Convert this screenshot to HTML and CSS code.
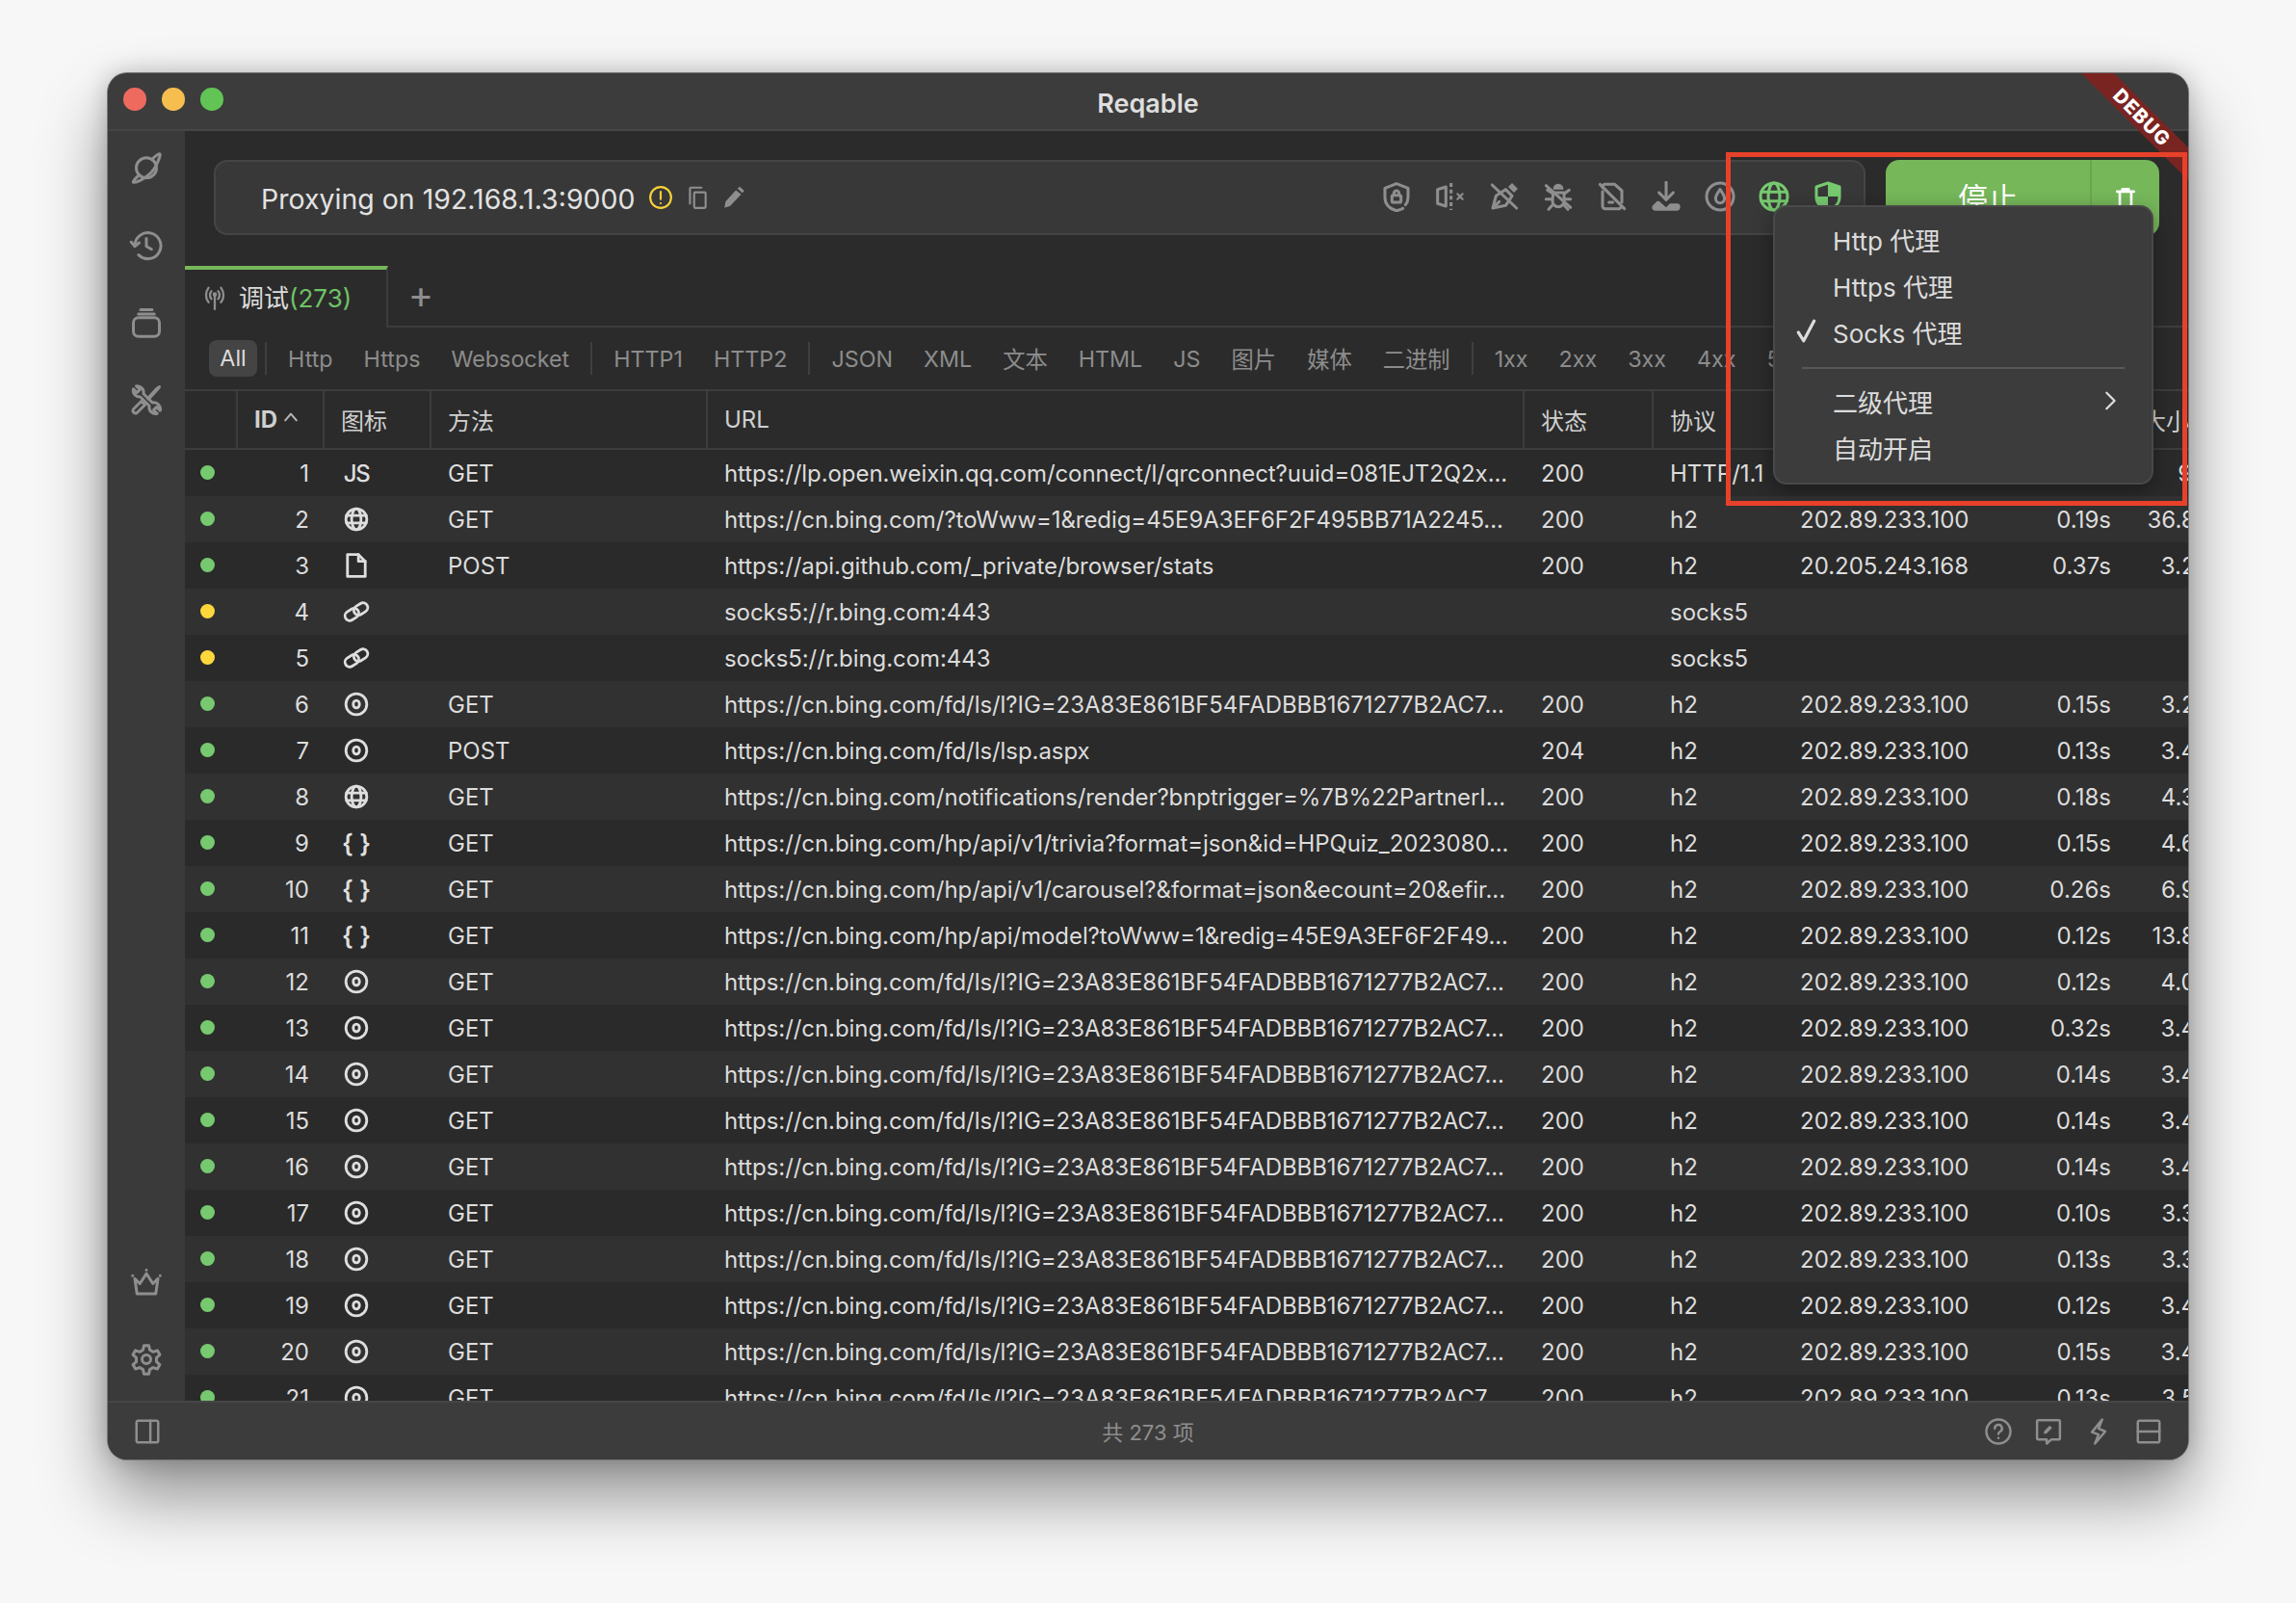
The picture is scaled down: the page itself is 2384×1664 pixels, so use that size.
FILE: index.html
```html
<!DOCTYPE html>
<html lang="en">
<head>
  <meta charset="UTF-8" />
  <meta name="viewport" content="width=device-width, initial-scale=1.0"/>
  <title>Reqable</title>
  <link rel="stylesheet" href="styles.css">
</head>
<body>
  <svg class="sprite" xmlns="http://www.w3.org/2000/svg">
    <symbol id="i-target" viewBox="0 0 24 24"><circle cx="12" cy="12" r="10"/><ellipse cx="12" cy="12" rx="3" ry="3.6"/></symbol>
    <symbol id="i-globe" viewBox="0 0 24 24"><circle cx="12" cy="12" r="10"/><ellipse cx="12" cy="12" rx="4.5" ry="10"/><path d="M2.500 8.500h19M2.500 15.500h19"/></symbol>
    <symbol id="i-doc" viewBox="0 0 24 24"><path d="M3.500 1.500h10.500l6.500 6.500v14.500h-17z"/><path d="M14 1.500V8h6.500"/></symbol>
    <symbol id="i-link" viewBox="-1.800 -1.800 27.600 27.600"><g transform="rotate(-32 12 12)"><rect x="0" y="7.500" width="14" height="9" rx="4.500"/><rect x="10" y="7.500" width="14" height="9" rx="4.500"/></g></symbol>
  </svg>

  <div class="window">
    <header class="titlebar">
      <div class="lights"><i class="light red"></i><i class="light amber"></i><i class="light green"></i></div>
      <div class="app-title">Reqable</div>
    </header>

    <div class="body">
      <nav class="sidebar">
        <div class="side-group">
          <svg class="ic side-ic" viewBox="0 0 24 24"><circle cx="12" cy="11.500" r="7"/><path d="M7 16.500c-3 2.500-4.500 4.500-4 5 2 .5 8-2.500 12-6.500s7-12.500 6.500-13c-.5-.5-2.500.5-5 3"/></svg>
          <svg class="ic side-ic" viewBox="0 0 24 24"><path d="M4 12a9 9 0 1 1 2.600 6.400"/><path d="M1.500 9.500 4 12.500l3-2.500"/><path d="M12 7v5.500l3.500 2"/></svg>
          <svg class="ic side-ic" viewBox="0 0 24 24"><path d="M8 3h8M6.500 6h11"/><rect x="3" y="8.500" width="18" height="13" rx="3.500"/></svg>
          <svg class="ic side-ic" viewBox="0 0 24 24" stroke-width="1.700"><path d="M3 4.500 5.500 7l2-2L5 2.500A4.500 4.500 0 0 1 10 7.800L16.200 14a4.500 4.500 0 0 1 5.300 5.500L19 17l-2 2 2.500 2.500A4.500 4.500 0 0 1 14 16.200L7.800 10A4.500 4.500 0 0 1 3 4.500z"/><path d="M8.500 13l2.500 2.500L5.500 21A1.800 1.800 0 0 1 3 18.500zM13 11l6-6.500L21 3l-1.500 2-6 6.500z"/></svg>
        </div>
        <div class="side-group">
          <svg class="ic side-ic" viewBox="0 0 24 24"><path d="M4 9.500l3.500 3.500L12 6l4.500 7L20 9.500 18.500 20h-13z"/><path d="M2.500 7.500h.01M12 3.500h.01M21.500 7.500h.01"/></svg>
          <svg class="ic side-ic" viewBox="0 0 24 24"><circle cx="12" cy="12" r="3"/><path d="M10.300 2.500h3.400l.6 3 2.400 1.400 2.900-1 1.700 3-2.300 2v2.800l2.300 2-1.700 3-2.900-1-2.400 1.400-.6 3h-3.400l-.6-3-2.400-1.400-2.900 1-1.700-3 2.300-2v-2.800l-2.300-2 1.700-3 2.900 1 2.400-1.400z"/></svg>
        </div>
      </nav>

      <main class="main">
        <div class="proxy-row">
          <div class="proxy-box">
            <span class="proxy-text">Proxying on 192.168.1.3:9000</span>
            <svg class="ic warn-ic" viewBox="0 0 24 24"><circle cx="12" cy="12" r="10"/><path d="M12 6.500v7M12 17.500h.01"/></svg>
            <svg class="ic small-ic" viewBox="0 0 24 24"><rect x="9" y="7" width="11" height="15" rx="1"/><path d="M5 18V3.500a1 1 0 0 1 1-1h10"/></svg>
            <svg class="ic small-ic" viewBox="0 0 24 24"><path class="solid" d="M3 22l1-6L14 5l5 4L8.500 20zM15.500 3.500 17.500 1.500l4.500 4-2 2z"/></svg>
            <div class="tools">
              <svg class="ic tool-ic" viewBox="0 0 24 24"><path d="M17 21.300c-1.500.8-3.200 1.200-5 1.700-5-1.500-9-5-9-10.500V5.500L12 2l9 3.500v7c0 2.500-.8 4.500-2 6"/><rect x="8.500" y="11" width="7" height="5.500" rx="1"/><path d="M10 11V9.500a2 2 0 0 1 4 0V11"/></svg>
              <svg class="ic tool-ic" viewBox="0 0 24 24"><path d="M2 6.500 8.500 4.500v15L2 17.500z"/><path d="M12.500 1.500v21" stroke-dasharray="3 2" stroke-linecap="butt"/><path d="M17.500 10l4 4M21.500 10l-4 4" stroke-width="1.600"/></svg>
              <svg class="ic tool-ic" viewBox="0 0 24 24"><path d="M3 21l2.500-9.500L13 6.500l5 5-5 7.500zM3 21l5-5"/><path class="solid" d="M15 4.500 18 1.500l4.500 4.500-3 3z"/><path d="M2.500 3 21.500 21"/></svg>
              <svg class="ic tool-ic" viewBox="0 0 24 24"><path class="solid" d="M12 2a4 4 0 0 1 4 4.500H8A4 4 0 0 1 12 2z"/><path d="M8 9h8.500v6.500a4.500 4.500 0 0 1-9 0zM8 10 3.500 7M16.500 10 20.500 7M7.500 14H2.500M16.500 14h5M8 18l-3.500 4M16 18l3.500 4"/><path d="M2.500 3.500 21.500 20.500"/></svg>
              <svg class="ic tool-ic" viewBox="0 0 24 24"><path d="M4.500 5V4.500a2 2 0 0 1 2-2H14l5.500 5v9M19 20a2 2 0 0 1-1.500 1.500h-11a2 2 0 0 1-2-2V8"/><path d="M9.500 16.500h3"/><path d="M2.500 2.500 21.500 21.500"/></svg>
              <svg class="ic tool-ic" viewBox="0 0 24 24"><path d="M12 1v13M6.500 9l5.500 5.500L17.500 9"/><path class="solid" d="M3.500 23A2.500 2.500 0 0 1 1 20.500c0-.8.3-1.300.8-1.800L5 15.500h1.500l5.500 5 3-3h6A2.800 2.800 0 0 1 23 20.300 2.700 2.700 0 0 1 20.500 23z"/></svg>
              <svg class="ic tool-ic" viewBox="0 0 24 24"><circle cx="12" cy="12" r="10.500"/><path d="M12 6.500c2 3 3.500 4.800 3.500 7a3.500 3.500 0 0 1-7 0c0-2.200 1.500-4 3.500-7z"/></svg>
              <svg class="ic tool-ic on" viewBox="0 0 24 24"><circle cx="12" cy="12" r="10.500"/><ellipse cx="12" cy="12" rx="4.500" ry="10.500"/><path d="M2 8.500h20M2 15.500h20"/></svg>
              <svg class="ic tool-ic on" viewBox="0 0 24 24"><path d="M12 1.500 21 4.500v8c0 5-4 8.500-9 10-5-1.500-9-5-9-10v-8z"/><path class="solid" d="M12 1.500 21 4.500V12h-9zM3 12h9v10.500c-5-1.500-9-5-9-10.500z"/></svg>
            </div>
          </div>
          <div class="stop-btn">
            <span class="stop-label">停止</span>
            <span class="stop-clear"><svg class="ic trash-ic" viewBox="0 0 24 24"><path d="M4 5.500h16M9 5.500V3h6v2.500M6.500 5.500v16h11v-16"/></svg></span>
          </div>
        </div>

        <div class="tab-row">
          <div class="tab">
            <svg class="ic tab-ic" viewBox="0 0 24 24" stroke-width="1.500"><path d="M12 11v12M6.500 17c-3-3.500-3-9 0-13M17.500 17c3-3.500 3-9 0-13M9 14c-1.500-2-1.500-5 0-7M15 14c1.500-2 1.500-5 0-7"/><circle cx="12" cy="10" r="1"/></svg>
            <span>调试<em>(273)</em></span>
          </div>
          <div class="tab-add">+</div>
        </div>

        <div class="filters">
          <span class="chip active">All</span>
          <i class="sep"></i>
          <span>Http</span><span>Https</span><span>Websocket</span>
          <i class="sep"></i>
          <span>HTTP1</span><span>HTTP2</span>
          <i class="sep"></i>
          <span>JSON</span><span>XML</span><span>文本</span><span>HTML</span><span>JS</span><span>图片</span><span>媒体</span><span>二进制</span>
          <i class="sep"></i>
          <span>1xx</span><span>2xx</span><span>3xx</span><span>4xx</span><span>5xx</span>
        </div>

        <div class="table-head">
          <div></div>
          <div class="id-head">ID<svg class="ic sort-ic" viewBox="0 0 24 24"><path d="M5 16l7-8 7 8"/></svg></div>
          <div>图标</div>
          <div>方法</div>
          <div>URL</div>
          <div>状态</div>
          <div>协议</div>
          <div></div>
          <div></div>
          <div>大小</div>
        </div>

        <div class="rows">
          <div class="row"><i class="dot"></i><span class="num">1</span><span class="kind"><b class="js">JS</b></span><span>GET</span><span class="url">https://lp.open.weixin.qq.com/connect/l/qrconnect?uuid=081EJT2Q2x...</span><span>200</span><span>HTTP/1.1</span><span></span><span></span><span class="num">982 B</span></div>
          <div class="row"><i class="dot"></i><span class="num">2</span><span class="kind"><svg class="ic row-ic"><use href="#i-globe"/></svg></span><span>GET</span><span class="url">https://cn.bing.com/?toWww=1&amp;redig=45E9A3EF6F2F495BB71A2245...</span><span>200</span><span>h2</span><span>202.89.233.100</span><span class="num">0.19s</span><span class="num">36.81 KB</span></div>
          <div class="row"><i class="dot"></i><span class="num">3</span><span class="kind"><svg class="ic row-ic"><use href="#i-doc"/></svg></span><span>POST</span><span class="url">https://api.github.com/_private/browser/stats</span><span>200</span><span>h2</span><span>20.205.243.168</span><span class="num">0.37s</span><span class="num">3.21 KB</span></div>
          <div class="row"><i class="dot wait"></i><span class="num">4</span><span class="kind"><svg class="ic link-ic"><use href="#i-link"/></svg></span><span></span><span class="url">socks5://r.bing.com:443</span><span></span><span>socks5</span><span></span><span></span><span></span></div>
          <div class="row"><i class="dot wait"></i><span class="num">5</span><span class="kind"><svg class="ic link-ic"><use href="#i-link"/></svg></span><span></span><span class="url">socks5://r.bing.com:443</span><span></span><span>socks5</span><span></span><span></span><span></span></div>
          <div class="row"><i class="dot"></i><span class="num">6</span><span class="kind"><svg class="ic row-ic"><use href="#i-target"/></svg></span><span>GET</span><span class="url">https://cn.bing.com/fd/ls/l?IG=23A83E861BF54FADBBB1671277B2AC7...</span><span>200</span><span>h2</span><span>202.89.233.100</span><span class="num">0.15s</span><span class="num">3.21 KB</span></div>
          <div class="row"><i class="dot"></i><span class="num">7</span><span class="kind"><svg class="ic row-ic"><use href="#i-target"/></svg></span><span>POST</span><span class="url">https://cn.bing.com/fd/ls/lsp.aspx</span><span>204</span><span>h2</span><span>202.89.233.100</span><span class="num">0.13s</span><span class="num">3.41 KB</span></div>
          <div class="row"><i class="dot"></i><span class="num">8</span><span class="kind"><svg class="ic row-ic"><use href="#i-globe"/></svg></span><span>GET</span><span class="url">https://cn.bing.com/notifications/render?bnptrigger=%7B%22PartnerI...</span><span>200</span><span>h2</span><span>202.89.233.100</span><span class="num">0.18s</span><span class="num">4.31 KB</span></div>
          <div class="row"><i class="dot"></i><span class="num">9</span><span class="kind"><b>{ }</b></span><span>GET</span><span class="url">https://cn.bing.com/hp/api/v1/trivia?format=json&amp;id=HPQuiz_2023080...</span><span>200</span><span>h2</span><span>202.89.233.100</span><span class="num">0.15s</span><span class="num">4.61 KB</span></div>
          <div class="row"><i class="dot"></i><span class="num">10</span><span class="kind"><b>{ }</b></span><span>GET</span><span class="url">https://cn.bing.com/hp/api/v1/carousel?&amp;format=json&amp;ecount=20&amp;efir...</span><span>200</span><span>h2</span><span>202.89.233.100</span><span class="num">0.26s</span><span class="num">6.91 KB</span></div>
          <div class="row"><i class="dot"></i><span class="num">11</span><span class="kind"><b>{ }</b></span><span>GET</span><span class="url">https://cn.bing.com/hp/api/model?toWww=1&amp;redig=45E9A3EF6F2F49...</span><span>200</span><span>h2</span><span>202.89.233.100</span><span class="num">0.12s</span><span class="num">13.81 KB</span></div>
          <div class="row"><i class="dot"></i><span class="num">12</span><span class="kind"><svg class="ic row-ic"><use href="#i-target"/></svg></span><span>GET</span><span class="url">https://cn.bing.com/fd/ls/l?IG=23A83E861BF54FADBBB1671277B2AC7...</span><span>200</span><span>h2</span><span>202.89.233.100</span><span class="num">0.12s</span><span class="num">4.01 KB</span></div>
          <div class="row"><i class="dot"></i><span class="num">13</span><span class="kind"><svg class="ic row-ic"><use href="#i-target"/></svg></span><span>GET</span><span class="url">https://cn.bing.com/fd/ls/l?IG=23A83E861BF54FADBBB1671277B2AC7...</span><span>200</span><span>h2</span><span>202.89.233.100</span><span class="num">0.32s</span><span class="num">3.41 KB</span></div>
          <div class="row"><i class="dot"></i><span class="num">14</span><span class="kind"><svg class="ic row-ic"><use href="#i-target"/></svg></span><span>GET</span><span class="url">https://cn.bing.com/fd/ls/l?IG=23A83E861BF54FADBBB1671277B2AC7...</span><span>200</span><span>h2</span><span>202.89.233.100</span><span class="num">0.14s</span><span class="num">3.41 KB</span></div>
          <div class="row"><i class="dot"></i><span class="num">15</span><span class="kind"><svg class="ic row-ic"><use href="#i-target"/></svg></span><span>GET</span><span class="url">https://cn.bing.com/fd/ls/l?IG=23A83E861BF54FADBBB1671277B2AC7...</span><span>200</span><span>h2</span><span>202.89.233.100</span><span class="num">0.14s</span><span class="num">3.41 KB</span></div>
          <div class="row"><i class="dot"></i><span class="num">16</span><span class="kind"><svg class="ic row-ic"><use href="#i-target"/></svg></span><span>GET</span><span class="url">https://cn.bing.com/fd/ls/l?IG=23A83E861BF54FADBBB1671277B2AC7...</span><span>200</span><span>h2</span><span>202.89.233.100</span><span class="num">0.14s</span><span class="num">3.41 KB</span></div>
          <div class="row"><i class="dot"></i><span class="num">17</span><span class="kind"><svg class="ic row-ic"><use href="#i-target"/></svg></span><span>GET</span><span class="url">https://cn.bing.com/fd/ls/l?IG=23A83E861BF54FADBBB1671277B2AC7...</span><span>200</span><span>h2</span><span>202.89.233.100</span><span class="num">0.10s</span><span class="num">3.31 KB</span></div>
          <div class="row"><i class="dot"></i><span class="num">18</span><span class="kind"><svg class="ic row-ic"><use href="#i-target"/></svg></span><span>GET</span><span class="url">https://cn.bing.com/fd/ls/l?IG=23A83E861BF54FADBBB1671277B2AC7...</span><span>200</span><span>h2</span><span>202.89.233.100</span><span class="num">0.13s</span><span class="num">3.31 KB</span></div>
          <div class="row"><i class="dot"></i><span class="num">19</span><span class="kind"><svg class="ic row-ic"><use href="#i-target"/></svg></span><span>GET</span><span class="url">https://cn.bing.com/fd/ls/l?IG=23A83E861BF54FADBBB1671277B2AC7...</span><span>200</span><span>h2</span><span>202.89.233.100</span><span class="num">0.12s</span><span class="num">3.41 KB</span></div>
          <div class="row"><i class="dot"></i><span class="num">20</span><span class="kind"><svg class="ic row-ic"><use href="#i-target"/></svg></span><span>GET</span><span class="url">https://cn.bing.com/fd/ls/l?IG=23A83E861BF54FADBBB1671277B2AC7...</span><span>200</span><span>h2</span><span>202.89.233.100</span><span class="num">0.15s</span><span class="num">3.41 KB</span></div>
          <div class="row"><i class="dot"></i><span class="num">21</span><span class="kind"><svg class="ic row-ic"><use href="#i-target"/></svg></span><span>GET</span><span class="url">https://cn.bing.com/fd/ls/l?IG=23A83E861BF54FADBBB1671277B2AC7...</span><span>200</span><span>h2</span><span>202.89.233.100</span><span class="num">0.13s</span><span class="num">3.51 KB</span></div>
        </div>
      </main>
    </div>

    <footer class="statusbar">
      <svg class="ic status-ic" viewBox="0 0 24 24"><rect x="3" y="3" width="18" height="18" rx="1.500"/><path d="M14.500 3v18"/></svg>
      <div class="count">共 273 项</div>
      <div class="status-right">
        <svg class="ic status-ic" viewBox="0 0 24 24"><circle cx="12" cy="12" r="10"/><path d="M9 9.500a3 3 0 1 1 4.500 2.500c-1 .6-1.500 1-1.500 2M12 17.300h.01"/></svg>
        <svg class="ic status-ic" viewBox="0 0 24 24"><path d="M3.500 2.500h17a1 1 0 0 1 1 1v14a1 1 0 0 1-1 1h-6l-4 3.500v-3.500h-7a1 1 0 0 1-1-1v-14a1 1 0 0 1 1-1z"/><path class="solid" d="M8 14l.5-2.500 4.500-4.500 2 2-4.500 4.500z"/></svg>
        <svg class="ic status-ic" viewBox="0 0 24 24"><path d="M15 2 6.500 12.500l5.500 2-3 7.500 8.500-10-5.500-2.500z"/></svg>
        <svg class="ic status-ic" viewBox="0 0 24 24"><rect x="3" y="3" width="18" height="18" rx="1.500"/><path d="M3 12h18"/></svg>
      </div>
    </footer>

    <div class="debug-banner">DEBUG</div>

    <div class="proxy-menu">
      <div class="menu-item">Http 代理</div>
      <div class="menu-item">Https 代理</div>
      <div class="menu-item">
        <svg class="ic check-ic" viewBox="0 0 24 24"><path d="M4 13l5 8L19 2"/></svg>
        Socks 代理
      </div>
      <div class="menu-sep"></div>
      <div class="menu-item">
        二级代理
        <svg class="ic chevron-ic" viewBox="0 0 24 24"><path d="M8 3l9 9-9 9"/></svg>
      </div>
      <div class="menu-item">自动开启</div>
    </div>

    <div class="highlight"></div>
  </div>
</body>
</html>
```

FILE: styles.css
```css
* {
  box-sizing: border-box;
}

body {
  margin: 0;
  padding: 76px 0 0 112px;
  width: 2384px;
  height: 1664px;
  overflow: hidden;
  background: #f7f7f7;
  font-family: Inter, "Noto Sans CJK SC", sans-serif;
  font-size: 24px;
  color: #dcdcdc;
}

.sprite {
  display: none;
}

.ic {
  fill: none;
  stroke: currentColor;
  stroke-width: 2;
  stroke-linecap: round;
  stroke-linejoin: round;
  flex: none;
}

.ic .solid {
  fill: currentColor;
  stroke: none;
}

.window {
  position: relative;
  width: 2160px;
  height: 1439px;
  display: flex;
  flex-direction: column;
  border-radius: 20px;
  overflow: hidden;
  background: #2b2b2b;
}

body::before {
  content: "";
  position: absolute;
  left: 112px;
  top: 76px;
  width: 2160px;
  height: 1439px;
  border-radius: 20px;
  box-shadow: 0 0 0 1px #777, 0 38px 70px rgba(0, 0, 0, 0.42), 0 0 26px rgba(0, 0, 0, 0.22);
}

.titlebar {
  height: 60px;
  flex: none;
  display: grid;
  grid-template-columns: 1fr auto 1fr;
  align-items: center;
  background: #3c3c3c;
  border-bottom: 2px solid #464646;
}

.lights {
  display: flex;
  gap: 16.500px;
  padding-left: 16px;
  margin-top: -4px;
}

.light {
  width: 23.500px;
  height: 23.500px;
  border-radius: 50%;
}

.light.red { background: #ee6a5f; }
.light.amber { background: #f5be4f; }
.light.green { background: #61c454; }

.app-title {
  margin-top: 5px;
  font-size: 27px;
  font-weight: 600;
  color: #dedede;
}

.body {
  flex: 1;
  min-height: 0;
  display: flex;
}

.sidebar {
  width: 80px;
  flex: none;
  display: flex;
  flex-direction: column;
  justify-content: space-between;
  align-items: center;
  background: #3a3a3a;
  color: #8e8e8e;
  padding: 21px 0 25px;
}

.side-group {
  display: flex;
  flex-direction: column;
  gap: 44px;
}

.side-ic {
  width: 36px;
  height: 36px;
}

.main {
  flex: 1;
  min-width: 0;
  display: flex;
  flex-direction: column;
  overflow: hidden;
}

.proxy-row {
  display: flex;
  gap: 21px;
  padding: 30px 30px 31px;
  flex: none;
}

.proxy-box {
  width: 1715px;
  height: 78px;
  display: flex;
  align-items: center;
  padding-left: 47px;
  border: 2px solid #454545;
  border-radius: 14px;
  background: #383838;
  color: #8e8e8e;
}

.proxy-text {
  font-size: 28.500px;
  color: #e2e2e2;
  margin: 2px 13px 0 0;
}

.warn-ic {
  width: 26px;
  height: 26px;
  color: #f7d038;
  margin-right: 12px;
}

.small-ic {
  width: 26px;
  height: 26px;
  margin-right: 12px;
}

.tools {
  margin-left: auto;
  margin-right: 21px;
  display: flex;
  gap: 24px;
  margin-top: -3px;
}

.tool-ic {
  width: 32px;
  height: 32px;
  stroke-width: 2.300;
}

.tool-ic.on {
  color: #76c96f;
}

.stop-btn {
  width: 284px;
  height: 79px;
  display: flex;
  border-radius: 14px;
  background: #76b75a;
  color: #fff;
}

.stop-label {
  flex: 1;
  text-align: center;
  font-size: 31px;
  line-height: 79px;
  border-right: 2px solid #6aa651;
}

.stop-clear {
  width: 70px;
  display: flex;
  align-items: center;
  justify-content: center;
}

.trash-ic {
  width: 26px;
  height: 26px;
  stroke-width: 2.500;
}

.tab-row {
  height: 64px;
  flex: none;
  display: flex;
  border-bottom: 2px solid #3d3d3d;
}

.tab {
  width: 211px;
  height: 64px;
  display: flex;
  align-items: center;
  gap: 11px;
  padding: 0 0 5px 17px;
  border-top: 4px solid #76b75a;
  border-right: 2px solid #3d3d3d;
  background: #2b2b2b;
  font-size: 26px;
}

.tab em {
  font-style: normal;
  color: #6fc266;
}

.tab-ic {
  width: 28px;
  height: 28px;
  color: #8e8e8e;
}

.tab-add {
  width: 68px;
  text-align: center;
  font-size: 40px;
  line-height: 60px;
  color: #8e8e8e;
}

.filters {
  height: 64px;
  flex: none;
  display: flex;
  align-items: center;
  gap: 32px;
  padding-left: 25px;
  color: #8c8c8c;
  font-size: 23.300px;
  white-space: nowrap;
}

.chip.active {
  width: 50px;
  height: 38px;
  margin-right: -14px;
  line-height: 38px;
  text-align: center;
  border-radius: 8px;
  background: #444;
  color: #dcdcdc;
}

.sep {
  width: 2px;
  height: 34px;
  margin: 0 -10px;
  background: #3f3f3f;
}

.table-head,
.row {
  display: grid;
  grid-template-columns: 55px 90px 111px 287px 848px 134px 135px 248px 108px 136px;
  width: 2152px;
}

.table-head {
  height: 63px;
  flex: none;
  align-items: stretch;
  border-top: 2px solid #3d3d3d;
  border-bottom: 2px solid #3d3d3d;
  color: #cfcfcf;
}

.table-head > div {
  display: flex;
  align-items: center;
  padding-left: 17px;
  border-right: 2px solid #3d3d3d;
}

.table-head .id-head {
  font-weight: 700;
  gap: 4px;
}

.sort-ic {
  width: 20px;
  height: 20px;
  margin-top: -6px;
  color: #b5b5b5;
  stroke-width: 2.500;
}

.rows {
  flex: 1;
  min-height: 0;
  overflow: hidden;
}

.row {
  height: 48px;
  align-items: center;
  background: #2a2a2a;
  white-space: nowrap;
}

.row:nth-child(even) {
  background: #313131;
}

.row > span {
  padding-left: 17px;
}

.row > .url {
  letter-spacing: -0.07px;
}

.row > .num {
  padding: 0 16px 0 0;
  text-align: right;
}

.row > .kind {
  padding-left: 20px;
  display: flex;
  align-items: center;
  color: #dedede;
}

.kind b {
  width: 26px;
  display: flex;
  justify-content: center;
  font-size: 26px;
  font-weight: 600;
  white-space: nowrap;
}

.kind b.js {
  font-size: 24px;
  font-weight: 500;
  letter-spacing: -1.500px;
}

.row-ic {
  width: 26px;
  height: 26px;
  stroke-width: 2.600;
}

.link-ic {
  width: 30px;
  height: 30px;
  margin-left: -2px;
  stroke-width: 2.600;
}

.dot {
  width: 15px;
  height: 15px;
  margin: -2px 0 0 16px;
  border-radius: 50%;
  background: #76c96f;
}

.dot.wait {
  background: #fdd73b;
}

.statusbar {
  height: 61px;
  flex: none;
  display: grid;
  grid-template-columns: 1fr auto 1fr;
  align-items: center;
  padding: 0 26px;
  background: #3c3c3c;
  border-top: 2px solid #464646;
  color: #8e8e8e;
}

.status-ic {
  width: 30px;
  height: 30px;
}

.count {
  font-size: 22px;
  margin-top: -2px;
}

.status-right {
  justify-self: end;
  display: flex;
  gap: 22px;
}

/* overlays */
.debug-banner {
  position: absolute;
  left: 1962px;
  top: 34px;
  width: 300px;
  height: 24px;
  line-height: 24px;
  text-align: center;
  transform: rotate(45deg);
  background: #7a2422;
  color: #fff;
  font-size: 20px;
  font-weight: 800;
  letter-spacing: 1px;
}

.proxy-menu {
  position: absolute;
  left: 1729px;
  top: 137px;
  width: 395px;
  height: 290px;
  padding-top: 9px;
  border: 2px solid #494949;
  border-radius: 14px;
  background: #3c3c3c;
  box-shadow: 0 6px 20px rgba(0, 0, 0, 0.35);
}

.menu-item {
  height: 48px;
  display: flex;
  align-items: center;
  position: relative;
  padding-left: 60px;
  font-size: 26px;
  color: #dcdcdc;
}

.check-ic {
  position: absolute;
  left: 20px;
  top: 11px;
  width: 26px;
  height: 26px;
  stroke-width: 3;
}

.chevron-ic {
  position: absolute;
  right: 32px;
  top: 13px;
  width: 22px;
  height: 22px;
  stroke-width: 2.500;
}

.menu-sep {
  height: 2px;
  margin: 13px 28px 9px 28px;
  background: #585858;
}

.highlight {
  position: absolute;
  left: 1680px;
  top: 82px;
  width: 479px;
  height: 367px;
  border: 5px solid #e8412a;
}
```
